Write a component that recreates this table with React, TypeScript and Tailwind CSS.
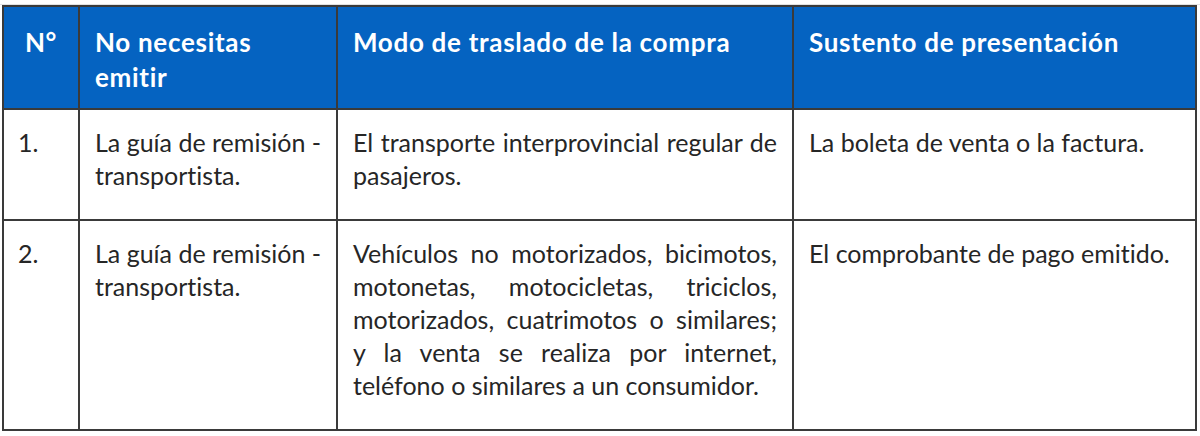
import React from "react";

interface Row {
  num: string;
  doc: string[];
  mode: string[];
  support: string[];
}

const rows: Row[] = [
  {
    num: "1.",
    doc: ["La guía de remisión -", "transportista."],
    mode: ["El transporte interprovincial regular de", "pasajeros."],
    support: ["La boleta de venta o la factura."],
  },
  {
    num: "2.",
    doc: ["La guía de remisión -", "transportista."],
    mode: [
      "Vehículos no motorizados, bicimotos,",
      "motonetas, motocicletas, triciclos,",
      "motorizados, cuatrimotos o similares;",
      "y la venta se realiza por internet,",
      "teléfono o similares a un consumidor.",
    ],
    support: ["El comprobante de pago emitido."],
  },
];

const Lines: React.FC<{ lines: string[]; justify?: boolean }> = ({ lines, justify }) => (
  <>
    {lines.map((line, i) => (
      <span
        key={i}
        className={
          justify && i < lines.length - 1
            ? "block text-justify [text-align-last:justify]"
            : "block"
        }
      >
        {line}
      </span>
    ))}
  </>
);

const headCell =
  "border-r-2 border-b-2 border-[#3a3a3a] bg-[#0563c1] px-[15px] pt-[18px] text-white font-bold text-[26px] tracking-[0.7px] leading-[35px]";
const bodyCell = "border-r-2 border-b-2 border-[#3a3a3a] px-[15px] pt-[16px] text-[25px] leading-[33px]";

export default function App() {
  return (
    <div
      className="w-[1200px] h-[436px] bg-white pt-[4px] [font-variant-ligatures:none]"
      style={{ fontFamily: "Lato, 'Noto Sans', sans-serif" }}
    >
      <div className="h-[1px] bg-[#e2e2e2]" />
      <div className="ml-[2px] w-[1195px] border-l-2 border-t-2 border-[#3a3a3a] text-[#262626] grid grid-cols-[76px_258px_456px_403px] grid-rows-[103px_111px_210px]">
        <div className={headCell + " text-center px-0"}>N°</div>
        <div className={headCell}>
          <Lines lines={["No necesitas", "emitir"]} />
        </div>
        <div className={headCell}>Modo de traslado de la compra</div>
        <div className={headCell}>Sustento de presentación</div>
        {rows.map((r) => (
          <React.Fragment key={r.num}>
            <div className={bodyCell + " pl-[14px]"}>{r.num}</div>
            <div className={bodyCell}>
              <Lines lines={r.doc} />
            </div>
            <div className={bodyCell}>
              <Lines lines={r.mode} justify />
            </div>
            <div className={bodyCell}>
              <Lines lines={r.support} />
            </div>
          </React.Fragment>
        ))}
      </div>
    </div>
  );
}
